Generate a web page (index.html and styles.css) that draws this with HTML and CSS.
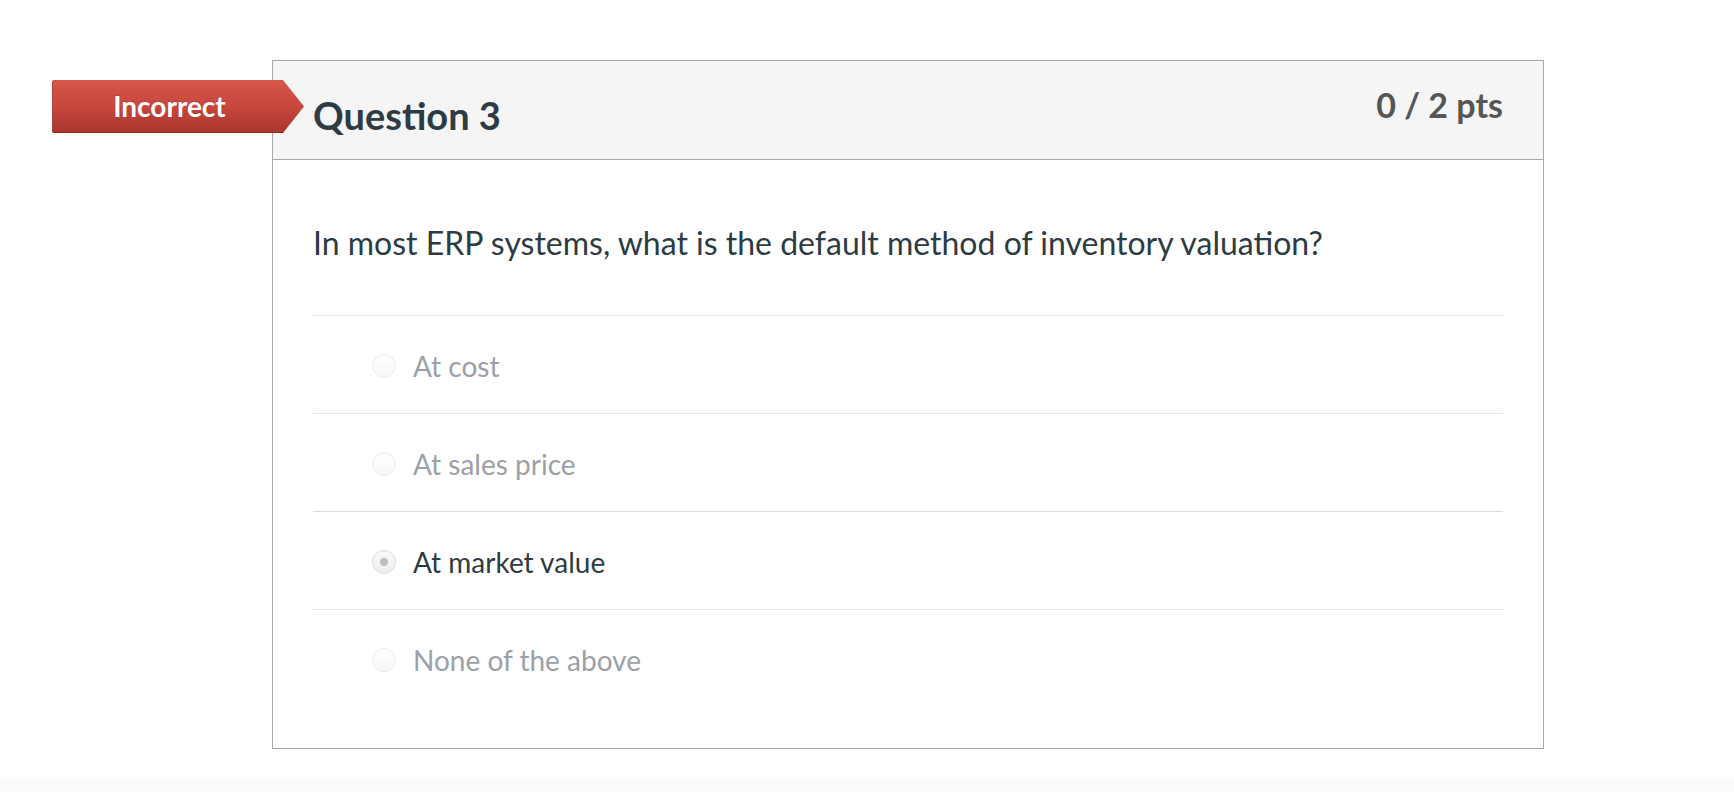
FILE: index.html
```html
<!DOCTYPE html>
<html lang="en">
<head>
<meta charset="utf-8">
<title>Question 3</title>
<link rel="stylesheet" href="styles.css">
</head>
<body>
<div class="page">
  <div class="question">
    <div class="badge"><span class="badge-text">Incorrect</span></div>
    <div class="q-header">
      <h2 class="q-title">Question 3</h2>
      <div class="q-points">0 / 2 pts</div>
    </div>
    <div class="q-body">
      <p class="q-text">In most ERP systems, what is the default method of inventory valuation?</p>
      <div class="answers">
        <div class="answer">
          <span class="radio"></span>
          <span class="answer-text">At cost</span>
        </div>
        <div class="answer">
          <span class="radio"></span>
          <span class="answer-text">At sales price</span>
        </div>
        <div class="answer selected">
          <span class="radio checked"></span>
          <span class="answer-text">At market value</span>
        </div>
        <div class="answer">
          <span class="radio"></span>
          <span class="answer-text">None of the above</span>
        </div>
      </div>
    </div>
  </div>
</div>
<div class="footer"></div>
</body>
</html>
```

FILE: styles.css
```css
html, body {
  margin: 0;
  padding: 0;
  background: #ffffff;
}

body {
  font-family: Lato, "Open Sans", "Liberation Sans", sans-serif;
  color: #2d3b45;
}

.page {
  padding: 60px 0 0 272px;
}

.question {
  position: relative;
  width: 1270px;
  border: 1px solid #a9a9a9;
  background: #ffffff;
}

.badge {
  position: absolute;
  left: -221px;
  top: 19px;
  width: 252px;
  height: 53px;
  background: linear-gradient(to bottom, #d7564c 0%, #c7463d 50%, #a8362d 100%);
  border-radius: 3px 0 0 3px;
  box-shadow: inset 0 -1px 0 #952c24, inset 1px 0 0 #b5443b;
  clip-path: polygon(0 0, 231px 0, 252px 50%, 231px 100%, 0 100%);
  display: flex;
  align-items: center;
}

.badge-text {
  width: 231px;
  text-align: center;
  padding-left: 4px;
  box-sizing: border-box;
  color: #ffffff;
  font-size: 28px;
  font-weight: 700;
  line-height: 53px;
  text-shadow: 0 -1px 0 rgba(0, 0, 0, 0.15);
}

.q-header {
  display: flex;
  justify-content: space-between;
  align-items: flex-start;
  height: 98px;
  padding: 0 40px;
  background: #f5f5f5;
  border-bottom: 1px solid #a9a9a9;
}

.q-title {
  margin: 35px 0 0 0;
  font-size: 38px;
  line-height: 38px;
  font-weight: 700;
  color: #2d3b45;
}

.q-points {
  margin-top: 27px;
  font-size: 34px;
  line-height: 34px;
  font-weight: 700;
  color: #565656;
}

.q-body {
  padding: 0 40px 41px;
}

.q-text {
  margin: 0;
  padding: 59px 0 49px;
  font-size: 32px;
  line-height: 47px;
  color: #2d3b45;
}

.answer {
  display: flex;
  align-items: center;
  height: 97px;
  box-sizing: border-box;
  height: 98px;
  padding-top: 2px;
  border-top: 1px solid #e6e6e6;
  padding-left: 59px;
}

.answer.selected {
  border-top-color: #d9d9d9;
}

.radio {
  width: 22px;
  height: 22px;
  border-radius: 50%;
  border: 1px solid #ececec;
  background: linear-gradient(to bottom, #ffffff, #f7f7f7);
  box-shadow: inset 0 1px 1px rgba(0, 0, 0, 0.03);
  display: flex;
  align-items: center;
  justify-content: center;
  flex: none;
}

.radio.checked {
  border-color: #dcdcdc;
  background: linear-gradient(to bottom, #fafafa, #eeeeee);
}

.radio.checked::after {
  content: "";
  width: 8px;
  height: 8px;
  border-radius: 50%;
  background: #bdbdbd;
}

.answer-text {
  margin-left: 17px;
  font-size: 28px;
  line-height: 34px;
  color: #9ba1a6;
}

.selected .answer-text {
  color: #2d3b45;
}

.footer {
  margin-top: 29px;
  height: 15px;
  background: #fbfbfb;
}
```
